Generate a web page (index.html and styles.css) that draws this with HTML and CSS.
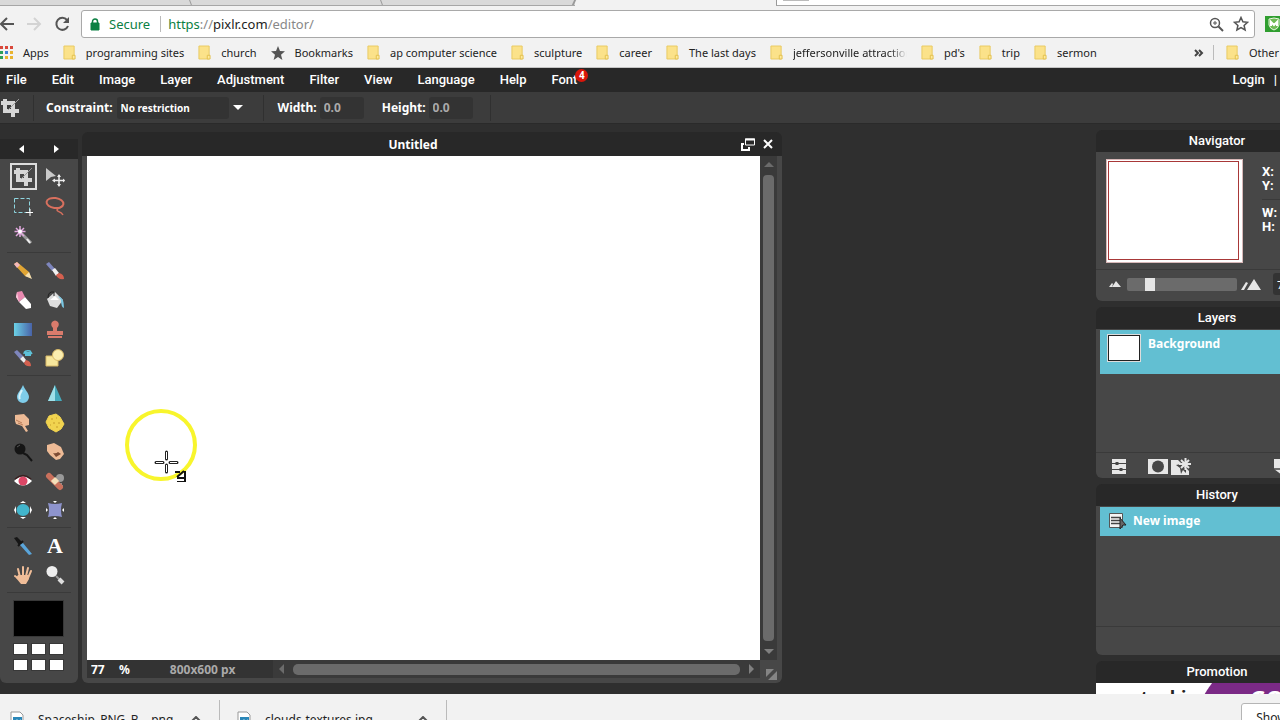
FILE: index.html
```html
<!DOCTYPE html>
<html lang="en">
<head>
	<meta charset="UTF-8">
	<title>Pixlr Editor</title>
	<link rel="stylesheet" href="styles.css">
</head>
<body>
<svg class="defs" width="0" height="0" aria-hidden="true">
	<symbol id="folder" viewBox="0 0 14 16"><path d="M1 1h11v14H1z" fill="#fbe28a" stroke="#e8c95e"/><path d="M10 11h3v4h-3z" fill="#ffe99b" stroke="#e2bf4c"/></symbol>
	<symbol id="crop" viewBox="0 0 20 20"><path d="M5 1v12h14M1 5h12v14" fill="none" stroke="#d6d6d6" stroke-width="4"/><path d="M8 12L19 1" stroke="#999" fill="none"/></symbol>
	<symbol id="picture" viewBox="0 0 14 17"><path d="M1 1h9l3 3v12H1z" fill="#fff" stroke="#999"/><path d="M3 6h9v8H3z" fill="#2b87b8"/><path d="M4 12l3-4 2 3 2-3v5H4z" fill="#d9f1fa"/></symbol>
	<symbol id="up" viewBox="0 0 10 6"><path d="M1 5l4-4 4 4" fill="none" stroke="#555" stroke-width="2"/></symbol>
</svg>
<div class="page">
	<!-- browser -->
	<div class="tabs">
		<div class="tabs-back"><i></i><i></i><i></i></div>
		<div class="tab-active"><i></i></div>
	</div>
	<div class="toolbar">
		<button class="nav-btn" aria-label="Back"><svg width="16" height="16" viewBox="0 0 16 16"><path d="M14 8H1M7 2L1 8l6 6" fill="none" stroke="#555" stroke-width="2"/></svg></button>
		<button class="nav-btn" aria-label="Forward"><svg width="16" height="16" viewBox="0 0 16 16"><path d="M1 8h13M8 2l6 6-6 6" fill="none" stroke="#d3d3d3" stroke-width="2"/></svg></button>
		<button class="nav-btn" aria-label="Reload"><svg width="16" height="16" viewBox="0 0 16 16"><path d="M13 4a6 6 0 1 0 1 6" fill="none" stroke="#555" stroke-width="2"/><path d="M15 1v6H9z" fill="#555"/></svg></button>
		<div class="address">
			<svg width="10" height="13" viewBox="0 0 10 13"><path d="M1 5h8v7H1z" fill="#0b8043" stroke="#0b8043"/><path d="M2.500 5V3.500a2.500 2.500 0 0 1 5 0V5" fill="none" stroke="#0b8043" stroke-width="1.500"/></svg>
			<span class="secure">Secure</span>
			<span class="url"><b>https</b>://<em>pixlr.com</em>/editor/</span>
			<svg width="15" height="15" viewBox="0 0 15 15"><circle cx="6" cy="6" r="4.500" fill="none" stroke="#555" stroke-width="1.500"/><path d="M9.500 9.500L14 14" stroke="#555" stroke-width="2"/><path d="M4 6h4M6 4v4" stroke="#555"/></svg>
			<svg width="16" height="16" viewBox="0 0 16 16"><path d="M8 1.500l1.900 4.300 4.600.5-3.400 3.100 1 4.600L8 11.600 3.900 14l1-4.600-3.400-3.100 4.600-.5z" fill="none" stroke="#555" stroke-width="1.500"/></svg>
		</div>
		<svg width="18" height="16" viewBox="0 0 18 16"><path d="M0 0h18v16H0z" fill="#2f9e2f"/><path d="M4 3l5-1 5 1v6q-1 4-5 5-4-1-5-5z" fill="#6fba55" stroke="#e8f5e0"/><path d="M6 10V6l3 3 3-3v4" fill="none" stroke="#fff" stroke-width="2"/></svg>
	</div>
	<div class="bookmarks">
		<a href="#"><svg width="13" height="13" viewBox="0 0 13 13"><path d="M0 0h3v3H0zM5 0h3v3H5zM10 0h3v3h-3z" fill="#d9483b"/><path d="M0 5h3v3H0z" fill="#2da05a"/><path d="M5 5h3v3H5z" fill="#3b82d6"/><path d="M10 5h3v3h-3zM5 10h3v3H5zM10 10h3v3h-3z" fill="#e9b430"/><path d="M0 10h3v3H0z" fill="#2da05a"/></svg>Apps</a>
		<a href="#"><svg width="13" height="15"><use href="#folder"/></svg>programming sites</a>
		<a href="#"><svg width="13" height="15"><use href="#folder"/></svg>church</a>
		<a href="#"><svg width="14" height="14" viewBox="0 0 14 14"><path d="M7 0l2 5 5 .3-4 3.400 1.400 5.300L7 11l-4.400 3L4 8.700 0 5.300 5 5z" fill="#555"/></svg>Bookmarks</a>
		<a href="#"><svg width="13" height="15"><use href="#folder"/></svg>ap computer science</a>
		<a href="#"><svg width="13" height="15"><use href="#folder"/></svg>sculpture</a>
		<a href="#"><svg width="13" height="15"><use href="#folder"/></svg>career</a>
		<a href="#"><svg width="13" height="15"><use href="#folder"/></svg>The last days</a>
		<a href="#"><svg width="13" height="15"><use href="#folder"/></svg><span class="faded">jeffersonville attractions</span></a>
		<a href="#"><svg width="13" height="15"><use href="#folder"/></svg>pd's</a>
		<a href="#"><svg width="13" height="15"><use href="#folder"/></svg>trip</a>
		<a href="#"><svg width="13" height="15"><use href="#folder"/></svg>sermon</a>
		<button class="more" aria-label="More bookmarks"><svg width="10" height="8" viewBox="0 0 10 8"><path d="M1 1l3 3-3 3M5 1l3 3-3 3" fill="none" stroke="#444" stroke-width="2"/></svg></button>
		<div class="other"><a href="#"><svg width="13" height="15"><use href="#folder"/></svg>Other</a></div>
	</div>

	<!-- editor menu -->
	<nav class="menu">
		<a href="#">File</a>
		<a href="#">Edit</a>
		<a href="#">Image</a>
		<a href="#">Layer</a>
		<a href="#">Adjustment</a>
		<a href="#">Filter</a>
		<a href="#">View</a>
		<a href="#">Language</a>
		<a href="#">Help</a>
		<a href="#" class="font">Font<span class="badge">4</span></a>
		<a href="#" class="login">Login</a>
		<span class="bar">|</span>
	</nav>
	<div class="options">
		<div class="opt-group opt-icon"><svg width="20" height="20"><use href="#crop"/></svg></div>
		<div class="opt-group opt-constraint">
			<label for="constraint">Constraint:</label>
			<select id="constraint"><option>No restriction</option></select>
			<svg width="10" height="5" viewBox="0 0 10 5"><path d="M0 0h10L5 5z" fill="#fff"/></svg>
		</div>
		<div class="opt-group opt-size">
			<label for="width">Width:</label>
			<input id="width" type="text" value="0.0">
			<label for="height" class="second">Height:</label>
			<input id="height" type="text" value="0.0">
		</div>
	</div>

	<div class="workspace">
		<aside class="tools">
			<div class="tools-head">
				<svg width="5" height="8" viewBox="0 0 5 8"><path d="M5 0v8L0 4z" fill="#fff"/></svg>
				<svg width="5" height="8" viewBox="0 0 5 8"><path d="M0 0v8l5-4z" fill="#fff"/></svg>
			</div>
			<div class="tool-group">
				<button class="on" aria-label="Crop"><svg viewBox="0 0 20 20"><use href="#crop"/></svg></button>
				<button aria-label="Move"><svg viewBox="0 0 20 20"><path d="M1 1l10 8-5 1-5 4z" fill="#c9c9c9"/><path d="M14 8v11M8.500 13.500h11" stroke="#eee" stroke-width="1.500"/><path d="M12 10l2-3 2 3zM12 17l2 3 2-3zM10 11.500l-3 2 3 2zM18 11.500l2 2-2 2z" fill="#eee"/></svg></button>
				<button aria-label="Marquee"><svg viewBox="0 0 20 20"><path d="M1.500 2.500h15v14h-15z" fill="none" stroke="#8fd6e0" stroke-dasharray="4 2"/><path d="M17 13v7M13 16.500h7" stroke="#fff"/></svg></button>
				<button aria-label="Lasso"><svg viewBox="0 0 20 20"><ellipse cx="10" cy="7" rx="8.500" ry="5" fill="none" stroke="#d8705e" stroke-width="2" transform="rotate(8 10 7)"/><path d="M17 10c-2 3-5 2-5 4s4 1 6 5" fill="none" stroke="#d8705e" stroke-width="1.500"/></svg></button>
				<button aria-label="Wand"><svg viewBox="0 0 20 20"><path d="M7 7l11 11" stroke="#999" stroke-width="3"/><path d="M14 14l3 4" stroke="#eee" stroke-width="2"/><path d="M7 1v11M1.500 6.500h11M3 3l8 8M11 3l-8 8" stroke="#e3a9e0" stroke-width="1.500"/><circle cx="7" cy="6.500" r="2" fill="#fff"/></svg></button>
			</div>
			<div class="tool-group">
				<button aria-label="Pencil"><svg viewBox="0 0 20 20"><path d="M1 3l3-2 12 10 2 6-6-2z" fill="#e0a534"/><path d="M1 3l3-2 3 3-3 3z" fill="#f2b8bd"/><path d="M12 15l4-4 3 7z" fill="#f5dfb0"/></svg></button>
				<button aria-label="Brush"><svg viewBox="0 0 20 20"><path d="M1 3l3-2 6 7-3 2z" fill="#7e86bd"/><path d="M7 9l3-2 4 5-3 3z" fill="#f1f1f1"/><path d="M11 14l3-2q5 1 5 6-6 1-8-4z" fill="#d4604f"/></svg></button>
				<button aria-label="Eraser"><svg viewBox="0 0 20 20"><path d="M4 2l5-1 3 6-6 5-3-5z" fill="#e98ab1"/><path d="M6 12l6-5 6 7v4l-5 1z" fill="#fff"/><path d="M4 2l2 10-3-5z" fill="#f8c9da"/></svg></button>
				<button aria-label="Paint bucket"><svg viewBox="0 0 20 20"><path d="M2 9l8-7 8 8-6 8-7-2z" fill="#ddd"/><path d="M13 6q6 1 6 12-3-1-3-8z" fill="#7ac7e2"/><path d="M3 8q0-7 6-6v4" fill="none" stroke="#222"/><path d="M5 10l5-4 4 4" fill="#fff"/></svg></button>
				<button aria-label="Gradient"><svg viewBox="0 0 20 20"><linearGradient id="grad"><stop stop-color="#6bd1e6"/><stop offset="1" stop-color="#4963a8"/></linearGradient><path d="M1 4h18v13H1z" fill="url(#grad)"/></svg></button>
				<button aria-label="Clone stamp"><svg viewBox="0 0 20 20"><path d="M8 9Q5 6 7 3q3-3 6 0 2 3-1 6v3h6v4H2v-4h6zM3 17h14v2H3z" fill="#d97b6c"/></svg></button>
				<button aria-label="Color replace"><svg viewBox="0 0 20 20"><path d="M1 4l3-2 6 6-3 3z" fill="#7e86bd"/><path d="M7 11l3-3 3 4-2 3z" fill="#eee"/><path d="M11 15l2-3q5 1 5 6-5 1-7-3z" fill="#d4604f"/><path d="M12 4h6v4h-6z" fill="#5ec2d8"/><path d="M11 6q0-4 6-3l2 3" stroke="#5ec2d8" stroke-width="1.500" fill="none"/></svg></button>
				<button aria-label="Drawing"><svg viewBox="0 0 20 20"><path d="M1 8h12v10H1z" fill="#f6e69c" stroke="#d8b968"/><circle cx="13" cy="7" r="5.500" fill="#fbeeb0" stroke="#d8b968"/></svg></button>
			</div>
			<div class="tool-group">
				<button aria-label="Blur"><svg viewBox="0 0 20 20"><path d="M10 1c2 5 6 8 6 12a6 6 0 0 1-12 0c0-4 4-7 6-12z" fill="#7fcdea"/><path d="M9 6c-2 4-4 6-2 9" stroke="#d8f3fb" stroke-width="2" fill="none"/></svg></button>
				<button aria-label="Sharpen"><svg viewBox="0 0 20 20"><path d="M10 1l7 16H3z" fill="#45a9bb"/><path d="M10 1v16H3z" fill="#9fe1ea"/></svg></button>
				<button aria-label="Smudge"><svg viewBox="0 0 20 20"><path d="M2 2l9-1 5 5v6l-4 1 3 5-2 1-4-6-6-2-1-3z" fill="#eebb96"/><path d="M3 7l6 3M5 10l5 2" stroke="#b87c58"/></svg></button>
				<button aria-label="Sponge"><svg viewBox="0 0 20 20"><path d="M4 3l7-2 4 3 4 7-3 5-5 3-7-4-3-6z" fill="#f1d34f" stroke="#f1d34f" stroke-linejoin="round"/><path d="M6 6h2M11 5h1M8 10h2M13 10h2M5 12h1M11 14h2" stroke="#c79c2c"/></svg></button>
				<button aria-label="Dodge"><svg viewBox="0 0 20 20"><circle cx="7" cy="7" r="5.500" fill="#151515"/><path d="M10 11l4 2 5 6" fill="none" stroke="#151515" stroke-width="2"/><path d="M4 5l3-2" stroke="#555"/></svg></button>
				<button aria-label="Burn"><svg viewBox="0 0 20 20"><path d="M2 3l7-2 7 4 3 7-4 5-4 1-6-5-3-4z" fill="#eebb96"/><path d="M8 11q3 1 5-1l3 2-5 3z" fill="#7d4c35"/></svg></button>
				<button aria-label="Red eye"><svg viewBox="0 0 20 20"><path d="M1 10q9-9 18 0-9 9-18 0z" fill="#fff"/><circle cx="10" cy="10" r="4.500" fill="#dc4766"/><path d="M2 8q8-7 16 0" fill="none" stroke="#3a2020" stroke-width="1.500"/></svg></button>
				<button aria-label="Spot heal"><svg viewBox="0 0 20 20"><circle cx="15" cy="7" r="4" fill="#999"/><path d="M13 15h6M16 12v6" stroke="#ddd" stroke-dasharray="2 1"/><path d="M4 5l11 11" stroke="#c9705c" stroke-width="6" stroke-linecap="round"/><path d="M8 8l4 4" stroke="#f5dfb9" stroke-width="6"/></svg></button>
				<button aria-label="Bloat"><svg viewBox="0 0 20 20"><ellipse cx="10" cy="10" rx="6.500" ry="6" fill="#42b5cc"/><path d="M7 3l3-2 3 2zM7 17l3 2 3-2zM3 6l-2 4 2 4zM17 6l2 4-2 4z" fill="#fff"/></svg></button>
				<button aria-label="Pinch"><svg viewBox="0 0 20 20"><path d="M3 3q7 2 14 0-2 7 0 14-7-2-14 0 2-7 0-14z" fill="#8e94cd"/><path d="M8 1h4l-2 2zM8 19h4l-2-2zM1 8v4l2-2zM19 8v4l-2-2z" fill="#fff"/></svg></button>
			</div>
			<div class="tool-group">
				<button aria-label="Color picker"><svg viewBox="0 0 20 20"><path d="M1 2l3-1 5 5-3 3z" fill="#161616"/><path d="M5 10l5-5" stroke="#161616" stroke-width="2"/><path d="M7 9l3-2 9 11-3 1z" fill="#5aa5da"/></svg></button>
				<button class="type" aria-label="Type">A</button>
				<button aria-label="Hand"><svg viewBox="0 0 20 20"><path d="M7 12L5 4M10 11V2M13 11l2-8M15 13l3-7M6 14l-4-3" stroke="#f0bd98" stroke-width="2" stroke-linecap="round"/><path d="M5 10l10 0 1 4-3 5H8l-5-6z" fill="#f0bd98"/></svg></button>
				<button aria-label="Zoom"><svg viewBox="0 0 20 20"><circle cx="7" cy="6.500" r="5.500" fill="#eee"/><path d="M11 11l4 4" stroke="#999" stroke-width="2"/><path d="M14 14l4 4" stroke="#ddd" stroke-width="4"/></svg></button>
			</div>
			<div class="colors">
				<button class="main-color" aria-label="Main color"></button>
				<button aria-label="Color 1"></button>
				<button aria-label="Color 2"></button>
				<button aria-label="Color 3"></button>
				<button aria-label="Color 4"></button>
				<button aria-label="Color 5"></button>
				<button aria-label="Color 6"></button>
			</div>
		</aside>

		<main class="document">
			<div class="doc-head">
				<h1>Untitled</h1>
				<button class="restore" aria-label="Restore"><svg width="14" height="13" viewBox="0 0 14 13"><path d="M4.500 1h9v6h-9z" fill="none" stroke="#fff"/><path d="M4 1.500h10" stroke="#fff" stroke-width="2"/><path d="M3 6H1v6h7V9" fill="none" stroke="#fff" stroke-width="2"/></svg></button>
				<button aria-label="Close"><svg width="10" height="10" viewBox="0 0 10 10"><path d="M1 1l8 8M9 1L1 9" stroke="#fff" stroke-width="2"/></svg></button>
			</div>
			<div class="doc-body">
				<div class="canvas">
					<svg class="pointer" width="80" height="80" viewBox="0 0 80 80">
						<circle cx="38" cy="39" r="34" fill="none" stroke="#f8f52c" stroke-width="4"/>
						<path d="M43.500 46v7M43.500 59v7M33 56.500h7M47 56.500h7" stroke="#222" stroke-width="3" stroke-linecap="round"/>
						<path d="M43.500 46v7M43.500 59v7M33 56.500h7M47 56.500h7" stroke="#fff"/>
						<path d="M52 66h5M54 72h9M62 65v11M61 65l-7 6" fill="none" stroke="#111" stroke-width="2"/>
						<path d="M54 75.500h9" stroke="#111"/>
					</svg>
				</div>
				<div class="v-scroll">
					<svg width="10" height="5" viewBox="0 0 10 5"><path d="M0 5h10L5 0z" fill="#6b6b6b"/></svg>
					<div class="thumb"></div>
					<svg width="10" height="5" viewBox="0 0 10 5"><path d="M0 0h10L5 5z" fill="#808080"/></svg>
				</div>
				<div class="status">
					<div class="status-info">
						<input type="text" value="77" aria-label="Zoom percent">
						<span>%</span>
						<span class="dims">800x600 px</span>
					</div>
					<div class="h-scroll">
						<svg width="5" height="10" viewBox="0 0 5 10"><path d="M5 0v10L0 5z" fill="#6b6b6b"/></svg>
						<div class="thumb"></div>
						<svg width="5" height="10" viewBox="0 0 5 10"><path d="M0 0v10l5-5z" fill="#808080"/></svg>
					</div>
				</div>
				<svg class="grip" width="12" height="12" viewBox="0 0 12 12"><path d="M1 1h8L1 9zM12 3v9H3z" fill="#858585"/></svg>
			</div>
		</main>

		<aside class="panels">
			<section class="panel">
				<h2>Navigator</h2>
				<div class="panel-body">
					<div class="navigator">
						<div class="preview"><div></div></div>
						<div class="coords">
							<p>X:<br>Y:</p>
							<p>W:<br>H:</p>
						</div>
					</div>
					<div class="panel-foot zoom">
						<svg width="12" height="6" viewBox="0 0 12 6"><path d="M0 6l3-4 1 1-1 3zM3 6l4-6 5 6z" fill="#e6e6e6"/></svg>
						<input type="range" min="0" max="100" value="18" aria-label="Zoom">
						<svg width="20" height="11" viewBox="0 0 20 11"><path d="M0 11l5-8 2 1-4 7zM6 11l7-11 7 11z" fill="#e6e6e6"/></svg>
						<input type="text" value="77" aria-label="Zoom level">
					</div>
				</div>
			</section>
			<section class="panel">
				<h2>Layers</h2>
				<div class="panel-body">
					<div class="row layer"><span class="layer-thumb"></span>Background</div>
					<div class="panel-foot layer-actions">
						<button aria-label="Layer settings"><svg width="14" height="15" viewBox="0 0 14 15"><path d="M0 0h14v15H0z" fill="#e6e6e6"/><path d="M0 4.500h14M0 10.500h14" stroke="#444"/><path d="M5 3v3M9 9v3" stroke="#444" stroke-width="3"/></svg></button>
						<button class="mask" aria-label="Add mask"><svg width="20" height="15" viewBox="0 0 20 15"><path d="M0 0h20v15H0z" fill="#e6e6e6"/><circle cx="10" cy="7.500" r="6" fill="#474747"/></svg></button>
						<button aria-label="New layer"><svg width="20" height="17" viewBox="0 0 20 17"><path d="M0 2h7l5 5 6 6v4H0z" fill="#e6e6e6"/><path d="M5 7l5-1 5 5v4l-3-3-2 4-1-6z" fill="#474747"/><path d="M14.500 0v12M8 6h12M10 2l8 8M18 2l-8 8" stroke="#e6e6e6" stroke-width="2"/></svg></button>
						<button class="trash" aria-label="Layer menu"><svg width="16" height="16" viewBox="0 0 16 16"><path d="M0 0h16v16H8L0 10z" fill="#e6e6e6"/><path d="M0 10h8v6" fill="none" stroke="#444" stroke-width="1.500"/></svg></button>
					</div>
				</div>
			</section>
			<section class="panel">
				<h2>History</h2>
				<div class="panel-body">
					<div class="row entry"><svg width="19" height="19" viewBox="0 0 19 19"><path d="M1.500 2.500h13v14h-13z" fill="#f4f4f4" stroke="#555"/><path d="M3 6.500h10M3 9.500h9M3 12.500h9" stroke="#444" stroke-width="1.500"/><path d="M12 7l6 7h-3l-3 4z" fill="#666" stroke="#222"/></svg>New image</div>
					<div class="panel-foot history-foot"></div>
				</div>
			</section>
			<section class="panel">
				<h2>Promotion</h2>
				<div class="promo"><span class="brand">at<b>co</b>ki</span><span class="offer">GO</span></div>
			</section>
		</aside>
	</div>

	<!-- downloads -->
	<footer class="downloads">
		<div class="download"><svg width="14" height="17"><use href="#picture"/></svg><span>Spaceship_PNG_B....png</span><svg width="10" height="6"><use href="#up"/></svg></div>
		<div class="download"><svg width="14" height="17"><use href="#picture"/></svg><span>clouds-textures.jpg</span><svg width="10" height="6"><use href="#up"/></svg></div>
		<button class="show-all">Show all</button>
	</footer>
</div>
</body>
</html>
```
FILE: styles.css
```css
* {
    box-sizing: border-box;
    margin: 0;
    padding: 0;
}

body {
    height: 100vh;
    overflow: hidden;
    font-family: "Noto Sans", "Open Sans", sans-serif;
    font-size: 12px;
    color: #222;
    background: #2f2f2f;
}

a {
    color: inherit;
    text-decoration: none;
}

button {
    border: 0;
    background: none;
    font: inherit;
    color: inherit;
    cursor: pointer;
}

svg {
    display: block;
    flex: none;
}

.defs {
    position: absolute;
}

/* the window runs past the right and bottom edge of the screen */
.page {
    display: flex;
    flex-direction: column;
    width: calc(100% + 58px);
    height: calc(100vh + 20px);
}

/* browser */
.tabs {
    display: flex;
    justify-content: space-between;
    flex: 0 0 6px;
    overflow: hidden;
    background: #f2f2f2;
}

.tabs-back {
    display: flex;
    width: 43%;
    border-bottom: 1px solid #a6a6a6;
    background: #d9d9d9;
}

.tabs-back i {
    flex: 1;
    border-right: 1px solid #999;
    transform: skewX(20deg);
}

.tabs-back i:last-child {
    border-right: 2px solid #999;
    transform: skewX(-25deg);
}

.tab-active {
    width: 42%;
    padding-left: 6px;
    border-left: 1px solid #999;
    border-bottom: 1px solid #a6a6a6;
    background: #fff;
}

.tab-active i {
    display: block;
    width: 26px;
    height: 1px;
    background: #bbb;
}

.toolbar {
    display: flex;
    align-items: center;
    flex: 0 0 36px;
    padding: 0 55px 0 0;
    background: #f2f2f2;
}

.nav-btn {
    width: 28px;
}

.nav-btn:first-child {
    width: 26px;
}

.nav-btn:nth-child(3) {
    width: 27px;
}

.address {
    display: flex;
    align-items: center;
    flex: 1;
    gap: 9px;
    height: 28px;
    margin-right: 10px;
    padding: 0 5px 0 8px;
    border: 1px solid #a9a9a9;
    border-radius: 3px;
    background: #fff;
    font-size: 13px;
}

.secure {
    padding-right: 10px;
    border-right: 1px solid #bbb;
    line-height: 16px;
    color: #0b8043;
}

.url {
    flex: 1;
    margin-left: -2px;
    color: #888;
}

.url b {
    font-weight: normal;
    color: #0b8043;
}

.url em {
    font-style: normal;
    color: #222;
}

.bookmarks {
    display: flex;
    align-items: center;
    flex: 0 0 26px;
    gap: 14px;
    padding-bottom: 4px;
    border-bottom: 1px solid #c4c4c4;
    background: #f2f2f2;
    font-size: 11px;
    white-space: nowrap;
}

.bookmarks a {
    display: flex;
    align-items: center;
    gap: 10px;
}

.faded {
    width: 114px;
    overflow: hidden;
    -webkit-mask-image: linear-gradient(to right, #000 85%, transparent);
    mask-image: linear-gradient(to right, #000 85%, transparent);
}

.more {
    margin-left: auto;
}

.other {
    flex: 0 0 125px;
    margin-left: -5px;
    padding-left: 12px;
    border-left: 1px solid #bbb;
}

/* editor menu */
.menu {
    display: flex;
    align-items: center;
    flex: 0 0 24px;
    gap: 25px;
    padding: 0 61px 0 6px;
    background: #282828;
    color: #fff;
    font: 500 13px/22px Roboto, sans-serif;
}

.font {
    position: relative;
}

.badge {
    position: absolute;
    top: 0;
    right: -11px;
    width: 13px;
    height: 13px;
    border-radius: 50%;
    background: #d9160b;
    font: bold 10px/13px Roboto, sans-serif;
    text-align: center;
}

.login {
    margin-left: auto;
}

.bar {
    margin-left: -16px;
}

.options {
    display: flex;
    align-items: center;
    flex: 0 0 32px;
    border-bottom: 1px solid #2a2a2a;
    background: #3c3c3c;
    color: #fff;
}

.opt-group {
    display: flex;
    align-items: center;
    height: 26px;
    border-right: 1px solid #303030;
}

.opt-icon {
    width: 34px;
}

.opt-constraint {
    gap: 4px;
    padding: 0 20px 0 12px;
}

.opt-size {
    gap: 3px;
    padding: 0 17px 0 14px;
}

.options label {
    font-weight: bold;
}

.options .second {
    margin-left: 15px;
}

.options select,
.options input {
    height: 22px;
    padding: 0 4px;
    border: 0;
    border-radius: 3px;
    background: #333;
    color: #fff;
    font: bold 10px "Noto Sans", sans-serif;
    appearance: none;
}

.options select {
    width: 112px;
}

.options input {
    width: 44px;
    font-size: 12px;
    color: #aaa;
}

/* workspace */
.workspace {
    display: flex;
    flex: 1;
    min-height: 0;
    overflow: hidden;
    padding: 6px 0 0;
    background: #2f2f2f;
}

.tools {
    width: 78px;
    margin: 9px 4px 11px 0;
    border-radius: 0 0 6px 6px;
    background: #474747;
}

.tools-head {
    display: flex;
    align-items: center;
    justify-content: center;
    gap: 30px;
    height: 20px;
    margin-bottom: 3px;
    background: #282828;
}

.tool-group {
    display: grid;
    grid-template-columns: 32px 32px;
    grid-auto-rows: 29px;
    place-items: center;
    margin: 0 7px 3px;
    padding-bottom: 3px;
    border-bottom: 1px solid #3a3a3a;
}

.tool-group button {
    display: grid;
    place-items: center;
    width: 27px;
    height: 27px;
    border: 2px solid transparent;
}

.tool-group .on {
    border-color: #ddd;
}

.tool-group svg {
    width: 20px;
    height: 20px;
}

.tool-group .type {
    color: #fff;
    font: bold 22px/20px "Liberation Serif", serif;
}

.colors {
    display: grid;
    grid-template-columns: repeat(3, 13px);
    gap: 6px 5px;
    justify-content: center;
    margin-right: 2px;
    padding-top: 5px;
}

.colors button {
    height: 10px;
    background: #fff;
    outline: 1px solid #383838;
}

.colors .main-color {
    grid-column: 1 / 4;
    height: 35px;
    margin-bottom: 2px;
    background: #000;
}

/* document window */
.document {
    display: flex;
    flex-direction: column;
    flex: 0 1 700px;
    margin: 2px 0 11px;
}

.doc-head {
    display: flex;
    align-items: center;
    flex: 0 0 24px;
    gap: 8px;
    padding: 0 9px 0 11px;
    border-radius: 6px 6px 0 0;
    background: #282828;
    color: #fff;
}

.doc-head h1 {
    flex: 1;
    font-size: 12px;
    text-align: center;
}

.doc-body {
    display: grid;
    grid-template: 1fr 18px / 1fr 17px;
    flex: 1;
    padding: 0 5px 5px;
    border-radius: 0 0 6px 6px;
    background: #474747;
}

.canvas {
    position: relative;
    background: #fff;
}

.pointer {
    position: absolute;
    left: 36px;
    top: 250px;
}

.v-scroll {
    display: flex;
    flex-direction: column;
    align-items: center;
    gap: 8px;
    padding: 6px 0;
    background: #3a3a3a;
}

.thumb {
    flex: 1;
    border-radius: 4px;
    background: #6b6b6b;
}

.v-scroll .thumb {
    width: 11px;
}

.status {
    display: flex;
    background: #3a3a3a;
}

.status-info {
    display: flex;
    align-items: center;
    width: 186px;
    padding-left: 4px;
    background: #333;
    color: #fff;
    font-size: 12px;
    font-weight: bold;
}

.status-info input {
    width: 28px;
    border: 0;
    background: none;
    color: inherit;
    font: inherit;
}

.dims {
    margin-left: 40px;
    color: #aaa;
}

.h-scroll {
    display: flex;
    align-items: center;
    flex: 1;
    gap: 9px;
    padding: 0 6px;
}

.h-scroll .thumb {
    height: 11px;
    border-radius: 5px;
}

.grip {
    place-self: end;
    margin-bottom: -2px;
}

/* side panels */
.panels {
    flex: 0 0 242px;
    margin-left: auto;
}

.panel {
    margin-bottom: 6px;
}

.panel h2 {
    height: 22px;
    border-radius: 6px 6px 0 0;
    background: #282828;
    color: #fff;
    font: 500 13px/22px Roboto, sans-serif;
    text-align: center;
}

.panel-body {
    display: flex;
    flex-direction: column;
    height: 149px;
    border-radius: 0 0 6px 6px;
    background: #474747;
    color: #fff;
    font-weight: bold;
}

.panel-foot {
    display: flex;
    align-items: center;
    height: 26px;
    margin-top: auto;
    border-top: 1px solid #3a3a3a;
}

.navigator {
    display: flex;
    gap: 19px;
    padding: 7px 0 0 10px;
}

.preview {
    width: 137px;
    height: 104px;
    padding: 1px 3px 2px 1px;
    border: 1px solid #d8b8b8;
    background: #fff;
}

.preview div {
    height: 99px;
    border: 1px solid #a83838;
}

.coords {
    flex: 1;
    font: bold 13px/14px Roboto, sans-serif;
}

.coords p {
    padding: 6px 0 6px;
}

.coords p + p {
    border-top: 1px solid #3a3a3a;
}

.zoom {
    gap: 4px;
    height: 32px;
    padding: 0 0 3px 13px;
}

.zoom input[type="range"] {
    width: 110px;
    height: 13px;
    margin-left: 2px;
    border-radius: 2px;
    background: #6b6b6b;
    appearance: none;
}

.zoom input[type="range"]::-webkit-slider-thumb {
    width: 10px;
    height: 13px;
    background: #e6e6e6;
    appearance: none;
}

.zoom input[type="text"] {
    width: 40px;
    height: 22px;
    margin-left: 8px;
    padding-left: 4px;
    border: 0;
    border-radius: 3px;
    background: #333;
    color: #fff;
    font: 11px "Noto Sans", sans-serif;
}

.row {
    display: flex;
    margin-left: 4px;
    background: #62bfd2;
}

.layer {
    gap: 7px;
    height: 44px;
    margin-top: 1px;
    padding: 4px 7px;
    line-height: 20px;
}

.layer-thumb {
    width: 34px;
    height: 28px;
    border: 1px solid #ddd;
    background: #fff;
    box-shadow: inset 0 0 0 1px #222;
}

.layer-actions {
    padding: 2px 0 0 16px;
}

.layer-actions .mask {
    margin: 0 3px 0 22px;
}

.layer-actions .trash {
    margin-left: 83px;
}

.entry {
    align-items: center;
    gap: 6px;
    height: 29px;
    margin-top: 1px;
    padding: 0 8px 3px;
}

.history-foot {
    height: 29px;
}

.promo {
    display: flex;
    gap: 64px;
    height: 90px;
    padding: 2px 0 0 34px;
    background: radial-gradient(circle at 208px 70px, #7b2a86 115px, transparent 116px) #fff;
    color: #222;
    font: bold 18px/24px "Noto Sans", sans-serif;
}

.promo b {
    color: #29a7cb;
}

.offer {
    color: #fff;
    font-size: 22px;
}

/* downloads */
.downloads {
    display: flex;
    align-items: center;
    flex: 0 0 46px;
    padding-right: 20px;
    background: #f2f2f2;
}

.download {
    display: flex;
    align-items: center;
    gap: 14px;
    width: 227px;
    height: 34px;
    padding: 4px 18px 0 17px;
    border-right: 1px solid #bbb;
}

.download span {
    flex: 1;
}

.download:first-child {
    width: 220px;
    padding-left: 10px;
}

.show-all {
    width: 77px;
    height: 29px;
    margin-left: auto;
    border: 1px solid #b5b5b5;
    border-radius: 3px;
    background: #fff;
}
```
